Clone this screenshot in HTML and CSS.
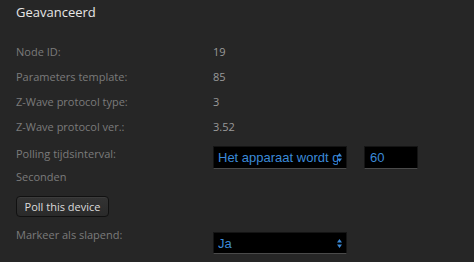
FILE: index.html
```html
<!DOCTYPE html>
<html>
	<head>
		<title>Geavanceerd</title>
		<meta charset="utf-8">
		<link rel="stylesheet" href="styles.css">
	</head>
	<body>
		<div class="panel">
			<h2>Geavanceerd</h2>
			<div class="row"><span class="label">Node ID:</span><span class="value">19</span></div>
			<div class="row"><span class="label">Parameters template:</span><span class="value">85</span></div>
			<div class="row"><span class="label">Z-Wave protocol type:</span><span class="value">3</span></div>
			<div class="row"><span class="label">Z-Wave protocol ver.:</span><span class="value">3.52</span></div>

			<div class="row poll">
				<span class="label">Polling tijdsinterval:</span>
				<div class="select">
					<select>
						<option>Het apparaat wordt geraadpleegd</option>
					</select>
					<svg class="arrows" width="5" height="9" viewBox="0 0 5 9"><path d="M2.5 0L5 3.5H0z M2.5 9L5 5.5H0z" fill="#3b8ad8"/></svg>
				</div>
				<input class="num" type="text" value="60">
			</div>
			<div class="unit">Seconden</div>
			<button class="btn">Poll this device</button>

			<div class="row sleep">
				<span class="label">Markeer als slapend:</span>
				<div class="select short">
					<select>
						<option>Ja</option>
						<option>Nee</option>
					</select>
					<svg class="arrows" width="5" height="9" viewBox="0 0 5 9"><path d="M2.5 0L5 3.5H0z M2.5 9L5 5.5H0z" fill="#3b8ad8"/></svg>
				</div>
			</div>
		</div>
	</body>
</html>
```

FILE: styles.css
```css
body {
	margin: 0;
	background: #262626;
	font-family: 'Open Sans', sans-serif;
	overflow: hidden;
}
.panel {padding: 2px 16px 0;}
h2 {
	margin: 0 0 17px;
	font-size: 13px;
	line-height: 20px;
	font-weight: 400;
	color: #e6e6e6;
}
.row {display: flex; align-items: flex-start; font-size: 11px; line-height: 25px; height: 25px;}
.label {width: 197px; color: #7b7b7b; flex: none;}
.value {color: #9a9a9a;}

.poll {margin-top: 6px; height: 24px; line-height: 17px;}
.poll .select {margin-top: 1px;}
.sleep {margin-top: 9px; height: 28px; line-height: 17px;}
.sleep .select {margin-top: 6px;}

.select {position: relative; width: 134px;}
.select select {
	-webkit-appearance: none;
	appearance: none;
	display: block;
	width: 134px;
	height: 23px;
	margin: 0;
	padding: 0 8px 0 4px;
	background: #000;
	border: 1px solid #141414;
	border-bottom-color: #4a4a4a;
	border-radius: 0;
	color: #3b8ad8;
	font-family: 'Liberation Sans', Arial, sans-serif;
	font-size: 13px;
	outline: none;
}
.short select {height: 22px;}
.arrows {position: absolute; right: 5px; top: 7px;}
.num {
	margin: 1px 0 0 17px;
	width: 54px;
	height: 23px;
	box-sizing: border-box;
	padding: 0 5px;
	background: #000;
	border: 1px solid #141414;
	border-bottom-color: #4a4a4a;
	color: #3b8ad8;
	font-family: 'Liberation Sans', Arial, sans-serif;
	font-size: 13px;
	outline: none;
}
.unit {font-size: 11px; line-height: 15px; color: #7b7b7b;}
.btn {
	display: block;
	margin-top: 12px;
	width: 93px;
	height: 21px;
	padding: 0;
	background: linear-gradient(#333, #2a2a2a);
	border: 1px solid #111;
	border-radius: 4px;
	box-shadow: inset 0 1px 0 #3c3c3c;
	color: #dcdcdc;
	font-family: 'Open Sans', sans-serif;
	font-size: 11px;
}
```
